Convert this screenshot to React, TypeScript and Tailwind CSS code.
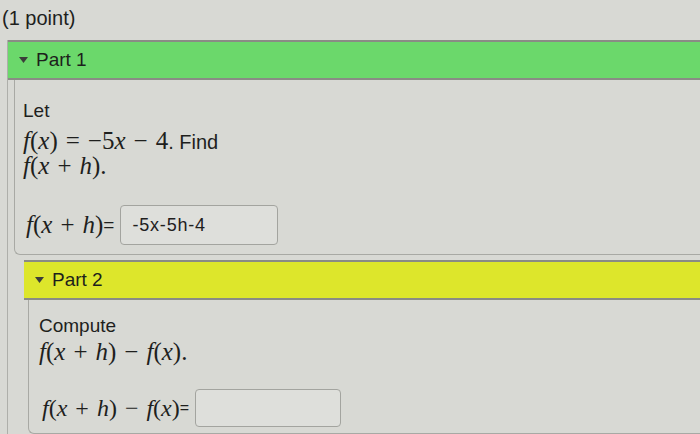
import React from 'react';

const serif = { fontFamily: '"Liberation Serif", "Times New Roman", serif' };

function V({ children }: { children: React.ReactNode }) {
  return <span className="italic">{children}</span>;
}

function Op({ children }: { children: React.ReactNode }) {
  return <span className="mx-[8px]">{children}</span>;
}

function Caret() {
  return (
    <svg className="h-[6px] w-[9px] shrink-0" viewBox="0 0 9 6">
      <path d="M0 0h9L4.5 6z" fill="#3b3d3a" />
    </svg>
  );
}

function PartHeader({ label, tone }: { label: string; tone: string }) {
  return (
    <div className={`flex h-[40px] items-center gap-[8px] border-y-2 border-[#8a8b85] pl-[11px] text-[19px] text-[#1d1f1c] ${tone}`}>
      <Caret />
      <span>{label}</span>
    </div>
  );
}

function AnswerBox({ value, width, height }: { value?: string; width: string; height: string }) {
  return (
    <div
      className={`flex items-center rounded-[4px] border border-[#a3a49f] bg-[#dedfdb] pl-[11px] text-[18px] tracking-[0.8px] text-[#1f201e] ${width} ${height}`}
    >
      {value}
    </div>
  );
}

export default function App() {
  return (
    <div
      className="h-[434px] w-[700px] overflow-hidden bg-[#d8d9d4] text-[#1e1f1d]"
      style={{ fontFamily: '"Liberation Sans", Arial, sans-serif' }}
    >
      <div className="pl-[2px] pt-[6px] text-[20px] leading-[24px]">(1 point)</div>

      <div className="ml-[7px] mt-[10px] h-[400px] border-l border-[#aeafaa]">
        {/* Part 1 */}
        <PartHeader label="Part 1" tone="bg-[#6bd86b]" />
        <div className="ml-[6px] rounded-bl-[6px] border-b border-l border-[#a8a9a4] pb-[9px] pl-[8px] pt-[18px]">
          <div className="text-[19px] leading-[26px]">Let</div>
          <div className="mt-[4px] flex items-baseline leading-[26px]">
            <span className="text-[25px]" style={serif}>
              <V>f</V>(<V>x</V>)<Op>=</Op>−5<V>x</V>
              <Op>−</Op>4
            </span>
            <span className="text-[20px]">. Find</span>
          </div>
          <div className="text-[25px] leading-[22px]" style={serif}>
            <V>f</V>(<V>x</V>
            <Op>+</Op>
            <V>h</V>).
          </div>
          <div className="mt-[28px] flex items-center pl-[3px]">
            <span className="text-[25px]" style={serif}>
              <V>f</V>(<V>x</V>
              <Op>+</Op>
              <V>h</V>)
            </span>
            <span className="text-[19px]">=</span>
            <div className="ml-[6px]">
              <AnswerBox value="-5x-5h-4" width="w-[158px]" height="h-[40px]" />
            </div>
          </div>
        </div>

        {/* Part 2 */}
        <div className="ml-[16px] mt-[5px]">
          <PartHeader label="Part 2" tone="bg-[#dde62b]" />
          <div className="ml-[4px] rounded-bl-[6px] border-b border-l border-[#a8a9a4] pb-[6px] pl-[10px] pt-[13px]">
            <div className="text-[19px] leading-[26px]">Compute</div>
            <div className="text-[25px] leading-[26px]" style={serif}>
              <V>f</V>(<V>x</V>
              <Op>+</Op>
              <V>h</V>)<Op>−</Op>
              <V>f</V>(<V>x</V>).
            </div>
            <div className="mt-[24px] flex items-center pl-[3px]">
              <span className="text-[24px]" style={serif}>
                <V>f</V>(<V>x</V>
                <Op>+</Op>
                <V>h</V>)<Op>−</Op>
                <V>f</V>(<V>x</V>)
              </span>
              <span className="text-[16px]">=</span>
              <div className="ml-[6px]">
                <AnswerBox width="w-[146px]" height="h-[38px]" />
              </div>
            </div>
          </div>
        </div>
      </div>
    </div>
  );
}
